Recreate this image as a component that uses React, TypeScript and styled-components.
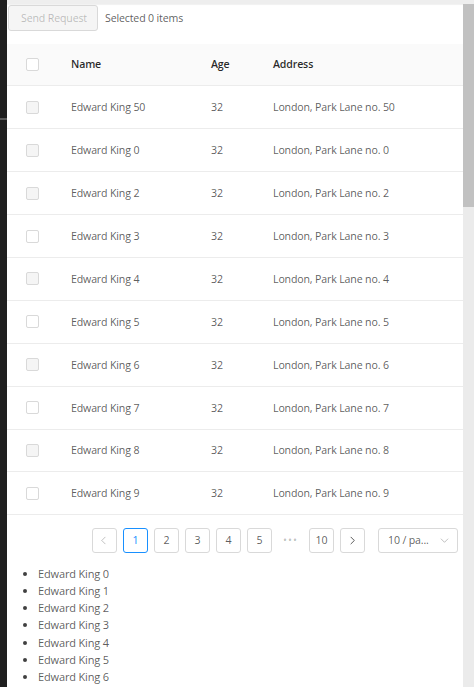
import React from 'react';
import styled, { createGlobalStyle } from 'styled-components';

const GlobalStyle = createGlobalStyle`
  html, body {
    margin: 0;
    padding: 0;
    background: #fff;
    font-family: "Open Sans", "Liberation Sans", sans-serif;
    overflow: hidden;
  }
  * { box-sizing: border-box; }
`;

const Screen = styled.div`
  display: flex;
  width: 474px;
  height: 687px;
  overflow: hidden;
`;

const Sidebar = styled.div`
  width: 7px;
  flex: none;
  background: #1f1f1f;
  display: flex;
  flex-direction: column;
  padding-top: 118px;
`;

const SidebarLine = styled.div`
  height: 2px;
  background: #5a5a5a;
`;

const Column = styled.div`
  flex: 1;
  display: flex;
  flex-direction: column;
  min-width: 0;
`;

const TopStrip = styled.div`
  height: 4px;
  flex: none;
  background: #eeeeee;
  box-shadow: 0 1px 1px rgba(0, 0, 0, 0.06);
`;

const Body = styled.div`
  flex: 1;
  display: flex;
  min-height: 0;
`;

const Content = styled.div`
  flex: 1;
  padding-top: 1px;
  min-width: 0;
  font-size: 10.6px;
  letter-spacing: -0.15px;
`;

const Scrollbar = styled.div`
  width: 11px;
  flex: none;
  background: #ebebeb;
  display: flex;
  flex-direction: column;
`;

const Thumb = styled.div`
  height: 203px;
  background: #c1c1c1;
`;

const Toolbar = styled.div`
  display: flex;
  align-items: center;
  gap: 7px;
  padding-left: 1px;
  height: 26px;
`;

const Button = styled.button`
  height: 26px;
  width: 90px;
  border: 1px solid #d9d9d9;
  background: #f5f5f5;
  border-radius: 3px;
  color: rgba(0, 0, 0, 0.25);
  font-family: inherit;
  font-size: inherit;
  letter-spacing: inherit;
  padding: 0 0 0 2px;
  cursor: not-allowed;
`;

const Note = styled.span`
  color: rgba(0, 0, 0, 0.65);
`;

const Table = styled.div`
  margin-top: 12.5px;
`;

const Row = styled.div<{ $head?: boolean }>`
  display: grid;
  grid-template-columns: 51px 140px 62px 1fr;
  align-items: center;
  height: 42.9px;
  border-bottom: 1px solid #ececec;
  background: ${(p) => (p.$head ? '#fafafa' : '#fff')};
  color: ${(p) => (p.$head ? 'rgba(0,0,0,0.85)' : 'rgba(0,0,0,0.65)')};
  font-weight: ${(p) => (p.$head ? 600 : 400)};
`;

const Cell = styled.div`
  padding-left: 13px;
  white-space: nowrap;
`;

const CheckCell = styled.div`
  padding-left: 19px;
  display: flex;
  align-items: center;
`;

const Check = styled.span<{ $disabled?: boolean }>`
  width: 13px;
  height: 13px;
  border: 1px solid #d9d9d9;
  border-radius: 2px;
  background: ${(p) => (p.$disabled ? '#f5f5f5' : '#fff')};
`;

const Pager = styled.div`
  display: flex;
  justify-content: flex-end;
  align-items: center;
  gap: 6px;
  margin-top: 12.5px;
  padding-right: 5px;
`;

const PageItem = styled.div<{ $active?: boolean; $muted?: boolean }>`
  min-width: 25px;
  height: 25px;
  padding: 0 5px;
  border: 1px solid ${(p) => (p.$active ? '#1890ff' : '#d9d9d9')};
  border-radius: 3px;
  display: flex;
  align-items: center;
  justify-content: center;
  color: ${(p) => (p.$active ? '#1890ff' : p.$muted ? 'rgba(0,0,0,0.25)' : 'rgba(0,0,0,0.65)')};
  background: #fff;
`;

const Dots = styled.div`
  width: 25px;
  text-align: center;
  letter-spacing: 1px;
  color: rgba(0, 0, 0, 0.25);
`;

const SizeSelect = styled.div`
  width: 80px;
  height: 25px;
  margin-left: 7px;
  border: 1px solid #d9d9d9;
  border-radius: 3px;
  display: flex;
  align-items: center;
  justify-content: space-between;
  padding: 0 8px 0 9px;
  color: rgba(0, 0, 0, 0.65);
`;

const Arrow = styled.span`
  display: flex;
  color: rgba(0, 0, 0, 0.25);
`;

const List = styled.ul`
  margin: 12px 0 0;
  padding-left: 31px;
  font-size: 11px;
  line-height: 17.2px;
  color: rgba(0, 0, 0, 0.65);
  li::marker { color: rgba(0, 0, 0, 0.75); }
`;

const Chevron = ({ dir }: { dir: 'left' | 'right' | 'down' }) => {
  const d =
    dir === 'left' ? 'M6 1 L2 5 L6 9' : dir === 'right' ? 'M3 1 L7 5 L3 9' : 'M1 3 L5 7 L9 3';
  return (
    <svg width="9" height="9" viewBox="0 0 10 10" fill="none" stroke="currentColor" strokeWidth="1.1">
      <path d={d} />
    </svg>
  );
};

const rows = [50, 0, 2, 3, 4, 5, 6, 7, 8, 9];
const disabled = (n: number) => n % 2 === 0;

export default function App() {
  return (
    <>
      <GlobalStyle />
      <Screen>
        <Sidebar>
          <SidebarLine />
        </Sidebar>
        <Column>
          <TopStrip />
          <Body>
            <Content>
              <Toolbar>
                <Button disabled>Send Request</Button>
                <Note>Selected 0 items</Note>
              </Toolbar>
              <Table>
                <Row $head>
                  <CheckCell><Check /></CheckCell>
                  <Cell>Name</Cell>
                  <Cell>Age</Cell>
                  <Cell>Address</Cell>
                </Row>
                {rows.map((n) => (
                  <Row key={n}>
                    <CheckCell><Check $disabled={disabled(n)} /></CheckCell>
                    <Cell>Edward King {n}</Cell>
                    <Cell>32</Cell>
                    <Cell>London, Park Lane no. {n}</Cell>
                  </Row>
                ))}
              </Table>
              <Pager>
                <PageItem $muted><Chevron dir="left" /></PageItem>
                <PageItem $active>1</PageItem>
                <PageItem>2</PageItem>
                <PageItem>3</PageItem>
                <PageItem>4</PageItem>
                <PageItem>5</PageItem>
                <Dots>•••</Dots>
                <PageItem>10</PageItem>
                <PageItem><Chevron dir="right" /></PageItem>
                <SizeSelect>
                  <span>10 / pa...</span>
                  <Arrow><Chevron dir="down" /></Arrow>
                </SizeSelect>
              </Pager>
              <List>
                {[0, 1, 2, 3, 4, 5, 6].map((n) => (
                  <li key={n}>Edward King {n}</li>
                ))}
              </List>
            </Content>
            <Scrollbar>
              <Thumb />
            </Scrollbar>
          </Body>
        </Column>
      </Screen>
    </>
  );
}
